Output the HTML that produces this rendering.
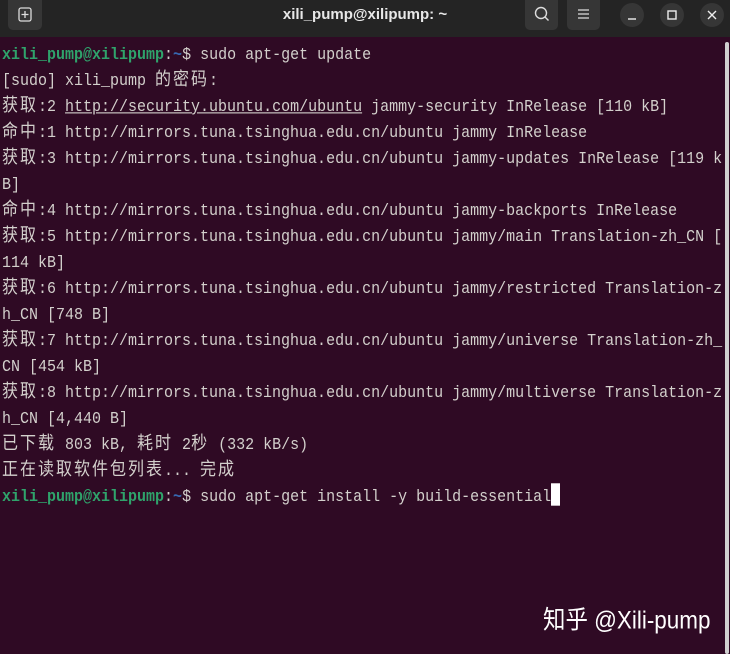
<!DOCTYPE html>
<html><head><meta charset="utf-8"><style>
html,body{margin:0;padding:0}
body{width:730px;height:654px;background:#2f0a24;overflow:hidden;position:relative;font-family:"Liberation Mono","Noto Sans CJK SC",monospace}
.bar{position:absolute;left:0;top:0;width:730px;height:37px;background:#242424}
.title{position:absolute;left:0;width:730px;top:0;height:30px;line-height:30px;text-align:center;color:#e8e8e8;font-family:"Liberation Sans",sans-serif;font-weight:bold;font-size:15px}
.btn{position:absolute;top:0;width:33px;height:30px;background:#363636;border-radius:0 0 5px 5px}
.circ{position:absolute;top:3px;width:24px;height:24px;border-radius:50%;background:#363636}
.term{position:absolute;left:2px;top:43px;color:#d3d0cc;font-size:15px}
.l{height:26px;line-height:26px;white-space:pre;overflow:visible}
.l>i{font-style:normal;display:inline-block;transform:scaleY(1.12);transform-origin:50% 55%}
.c{font-family:"Noto Sans CJK SC",sans-serif;font-size:16px;letter-spacing:2px;line-height:10px}
.g{color:#2fa36b;font-weight:bold}
.b{color:#3768b0;font-weight:bold}
.u{text-decoration:underline}
.cur{display:inline-block;width:9px;height:20px;background:#fff;vertical-align:-4px}
.scroll{position:absolute;left:725px;top:42px;width:4px;height:612px;background:#d0d0d0;border-radius:2px}
.wm{position:absolute;left:543px;top:602px;color:#fff;font-size:22px;font-family:"Liberation Sans","Noto Sans CJK SC",sans-serif;transform:scale(1.02,1.15);transform-origin:0 50%}
</style></head><body>
<div class="bar">
 <div class="btn" style="left:8px;width:34px"><svg width="34" height="30"><rect x="11" y="8" width="12" height="13" rx="2" fill="none" stroke="#ddd" stroke-width="1.3"/><path d="M17 11v7M13.5 14.5h7" stroke="#ddd" stroke-width="1.3"/></svg></div>
 <div class="title">xili_pump@xilipump: ~</div>
 <div class="btn" style="left:525px"><svg width="33" height="30"><circle cx="16" cy="13" r="5.5" fill="none" stroke="#ddd" stroke-width="1.4"/><path d="M20 17l3.5 3.5" stroke="#ddd" stroke-width="1.4"/></svg></div>
 <div class="btn" style="left:567px"><svg width="33" height="30"><path d="M11 10h11M11 14h11M11 18h11" stroke="#ddd" stroke-width="1.3"/></svg></div>
 <div class="circ" style="left:620px"><svg width="24" height="24"><path d="M8 16h8" stroke="#eee" stroke-width="1.4"/></svg></div>
 <div class="circ" style="left:660px"><svg width="24" height="24"><rect x="8" y="8" width="8" height="8" fill="none" stroke="#eee" stroke-width="1.4"/></svg></div>
 <div class="circ" style="left:700px"><svg width="24" height="24"><path d="M8 8l8 8M16 8l-8 8" stroke="#eee" stroke-width="1.4"/></svg></div>
</div>
<div class="scroll"></div>
<div class="term">
<div class="l"><i><span class="g">xili_pump@xilipump</span>:<span class="b">~</span>$ sudo apt-get update</i></div>
<div class="l"><i>[sudo] xili_pump <span class="c">的密码</span>:</i></div>
<div class="l"><i><span class="c">获取</span>:2 <span class="u">http://security.ubuntu.com/ubuntu</span> jammy-security InRelease [110 kB]</i></div>
<div class="l"><i><span class="c">命中</span>:1 http://mirrors.tuna.tsinghua.edu.cn/ubuntu jammy InRelease</i></div>
<div class="l"><i><span class="c">获取</span>:3 http://mirrors.tuna.tsinghua.edu.cn/ubuntu jammy-updates InRelease [119 k</i></div>
<div class="l"><i>B]</i></div>
<div class="l"><i><span class="c">命中</span>:4 http://mirrors.tuna.tsinghua.edu.cn/ubuntu jammy-backports InRelease</i></div>
<div class="l"><i><span class="c">获取</span>:5 http://mirrors.tuna.tsinghua.edu.cn/ubuntu jammy/main Translation-zh_CN [</i></div>
<div class="l"><i>114 kB]</i></div>
<div class="l"><i><span class="c">获取</span>:6 http://mirrors.tuna.tsinghua.edu.cn/ubuntu jammy/restricted Translation-z</i></div>
<div class="l"><i>h_CN [748 B]</i></div>
<div class="l"><i><span class="c">获取</span>:7 http://mirrors.tuna.tsinghua.edu.cn/ubuntu jammy/universe Translation-zh_</i></div>
<div class="l"><i>CN [454 kB]</i></div>
<div class="l"><i><span class="c">获取</span>:8 http://mirrors.tuna.tsinghua.edu.cn/ubuntu jammy/multiverse Translation-z</i></div>
<div class="l"><i>h_CN [4,440 B]</i></div>
<div class="l"><i><span class="c">已下载</span> 803 kB, <span class="c">耗时</span> 2<span class="c">秒</span> (332 kB/s)</i></div>
<div class="l"><i><span class="c">正在读取软件包列表</span>... <span class="c">完成</span></i></div>
<div class="l"><i><span class="g">xili_pump@xilipump</span>:<span class="b">~</span>$ sudo apt-get install -y build-essential<span class="cur"></span></i></div>
</div>
<div class="wm">知乎 @Xili-pump</div>
</body></html>
